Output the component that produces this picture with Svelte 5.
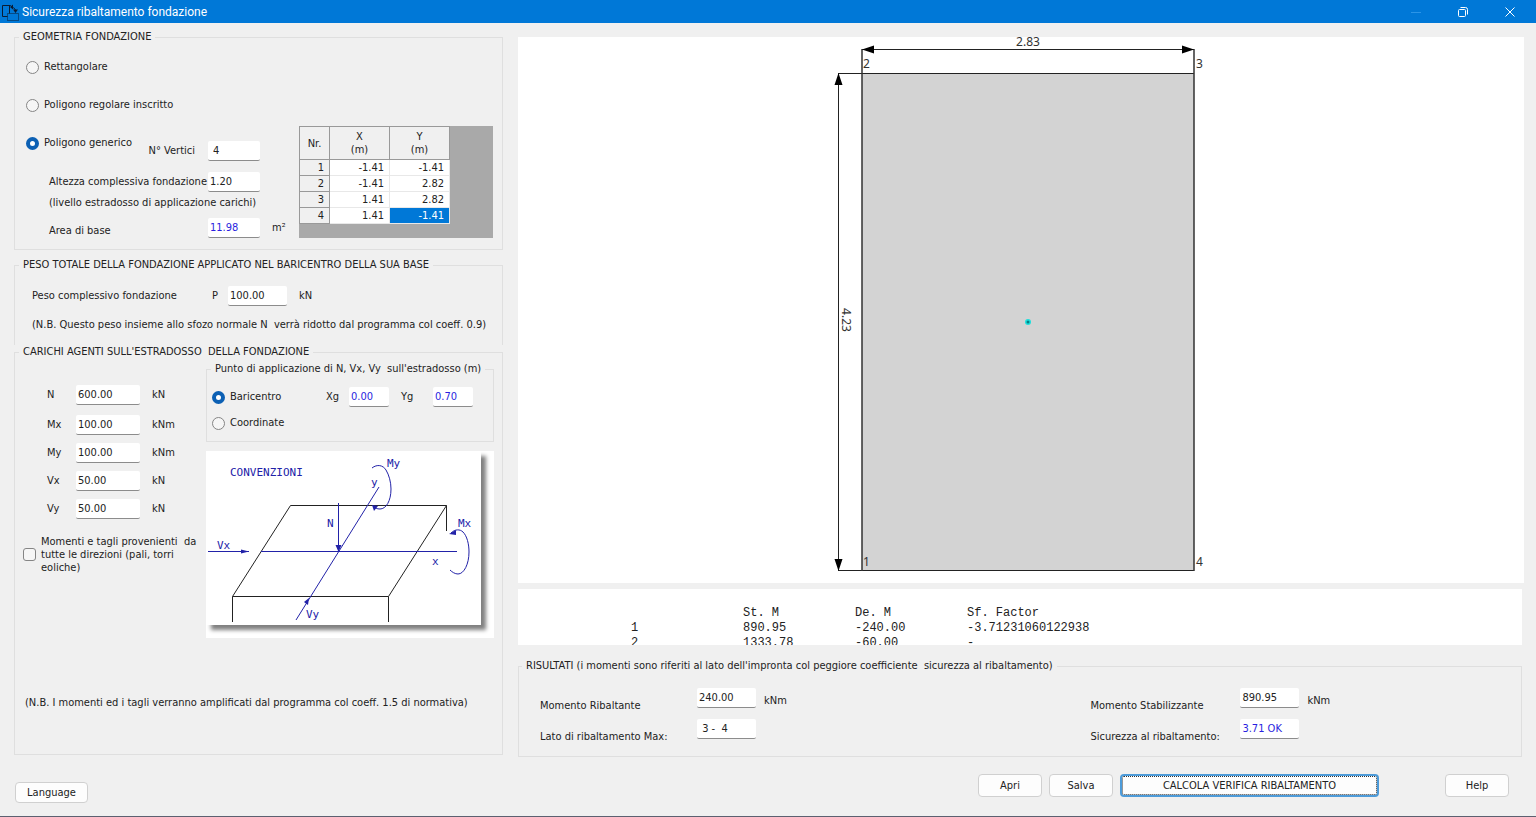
<script>
  let shape = $state("generic");
  let point = $state("centroid");
  let allDirections = $state(false);

  let vertexCount = $state("4");
  let height = $state("1.20");
  let weight = $state("100.00");

  const vertices = [
    { x: "-1.41", y: "-1.41" },
    { x: "-1.41", y: "2.82" },
    { x: "1.41", y: "2.82" },
    { x: "1.41", y: "-1.41" }
  ];
  let selected = $state(3);

  let loads = $state([
    { name: "N", value: "600.00", unit: "kN" },
    { name: "Mx", value: "100.00", unit: "kNm" },
    { name: "My", value: "100.00", unit: "kNm" },
    { name: "Vx", value: "50.00", unit: "kN" },
    { name: "Vy", value: "50.00", unit: "kN" }
  ]);

  const checks = [
    { side: "1", st: "890.95", de: "-240.00", sf: "-3.71231060122938" },
    { side: "2", st: "1333.78", de: "-60.00", sf: "-" }
  ];
</script>

<div class="window">
  <header>
    <svg class="app-icon" width="18" height="20" viewBox="0 0 18 20" fill="none" stroke="#0a1c33">
      <path d="M9.5 4V3.5h-8v11h5" />
      <path d="M8.5 3.5v8" />
      <path d="M11 5.500c2 0 3 1 3.500 3" />
      <path d="M12 7.500h5l-2.500 3.500z M12 2.500v5l-3-2.500z" fill="#0a1c33" stroke="none" />
      <path d="M6.500 11.500h11v7h-11z" stroke-dasharray="1 1" />
    </svg>
    <h1>Sicurezza ribaltamento fondazione</h1>
    <div class="controls">
      <button aria-label="Riduci a icona">
        <svg width="10" height="10"><path d="M0 5.5h10" stroke="#2b95e8" /></svg>
      </button>
      <button aria-label="Ripristina">
        <svg width="10" height="10" fill="none" stroke="#fff">
          <rect x="0.5" y="2.5" width="7" height="7" rx="1" />
          <path d="M2.500 .5h5a2 2 0 0 1 2 2v5" />
        </svg>
      </button>
      <button aria-label="Chiudi">
        <svg width="10" height="10"><path d="M.5 .5l9 9M9.500 .5l-9 9" stroke="#fff" /></svg>
      </button>
    </div>
  </header>

  <main>
    <div class="left">
      <fieldset class="geometry">
        <legend>GEOMETRIA FONDAZIONE</legend>
        <div class="geo-form">
          <label class="option"><input type="radio" value="rect" bind:group={shape} />Rettangolare</label>
          <label class="option"><input type="radio" value="regular" bind:group={shape} />Poligono regolare inscritto</label>
          <div class="generic">
            <label class="option"><input type="radio" value="generic" bind:group={shape} />Poligono generico</label>
            <label class="count" for="count">N° Vertici</label>
            <input id="count" class="count-box" bind:value={vertexCount} />
          </div>
          <div class="geo-row">
            <label for="height">Altezza complessiva fondazione</label>
            <input id="height" bind:value={height} />
          </div>
          <p class="hint">(livello estradosso di applicazione carichi)</p>
          <div class="geo-row area">
            <label for="area">Area di base</label>
            <input id="area" class="computed" value="11.98" readonly />
            <span>m²</span>
          </div>
        </div>
        <div class="sheet">
          <table>
            <thead>
              <tr><th>Nr.</th><th>X<br />(m)</th><th>Y<br />(m)</th></tr>
            </thead>
            <tbody>
              {#each vertices as v, i}
                <tr>
                  <th>{i + 1}</th>
                  <td>{v.x}</td>
                  <td class:selected={selected === i} onclick={() => (selected = i)}>{v.y}</td>
                </tr>
              {/each}
            </tbody>
          </table>
        </div>
      </fieldset>

      <fieldset class="weight">
        <legend>PESO TOTALE DELLA FONDAZIONE APPLICATO NEL BARICENTRO DELLA SUA BASE</legend>
        <div class="weight-row">
          <span>Peso complessivo fondazione</span>
          <label for="weight">P</label>
          <input id="weight" bind:value={weight} />
          <span class="unit">kN</span>
        </div>
        <p>(N.B. Questo peso insieme allo sfozo normale N&nbsp; verrà ridotto dal programma col coeff. 0.9)</p>
      </fieldset>

      <fieldset class="loads">
        <legend>CARICHI AGENTI SULL'ESTRADOSSO&nbsp; DELLA FONDAZIONE</legend>
        <div class="load-cols">
          <div class="load-list">
            {#each loads as load}
              <div class="load">
                <label for={load.name}>{load.name}</label>
                <input id={load.name} bind:value={load.value} />
                <span class="unit">{load.unit}</span>
              </div>
            {/each}
            <label class="directions">
              <input type="checkbox" bind:checked={allDirections} />
              <span>Momenti e tagli provenienti&nbsp; da<br />tutte le direzioni (pali, torri<br />eoliche)</span>
            </label>
          </div>

          <div class="load-side">
            <fieldset class="point">
              <legend>Punto di applicazione di N, Vx, Vy&nbsp; sull'estradosso (m)</legend>
              <div class="point-row">
                <label class="option"><input type="radio" value="centroid" bind:group={point} />Baricentro</label>
                <label for="xg">Xg</label>
                <input id="xg" class="computed" value="0.00" readonly />
                <label for="yg">Yg</label>
                <input id="yg" class="computed" value="0.70" readonly />
              </div>
              <label class="option"><input type="radio" value="coords" bind:group={point} />Coordinate</label>
            </fieldset>

            <figure>
              <svg width="275" height="174" viewBox="0 0 275 174" fill="none">
                <!-- footing block -->
                <path
                  stroke="#222"
                  d="M84.500 54.500H240.500V80M84.500 54.500L26.500 145.500H182.500L240.500 54.500M26.500 145.500V171M182.500 145.500V171"
                />
                <!-- axes and forces -->
                <g stroke="#2222a8">
                  <path d="M55 100.500H251M90 169L173 36M132.500 52V100M2 100.500H43" />
                  <path d="M166 17c5-4 11-3 14 2 3 5 5 12 5 19 0 12-5 20-11 20-3 0-5-1-7-3" />
                  <path d="M245 82c4-4 9-4 12-1 4 4 6 12 6 20 0 12-5 22-11 22-3 0-6-2-8-4" />
                </g>
                <path
                  fill="#2222a8"
                  d="M132.500 101l-3-7h6zM43 100.500l-8-2v4zM103 147l-5 4 4 3zM166 54l6 1-4 5zM243 83l7-4 0 5z"
                />
                <g class="cad" fill="#2222a8">
                  <text x="24" y="25">CONVENZIONI</text>
                  <text x="181" y="16">My</text>
                  <text x="165" y="35">y</text>
                  <text x="121" y="76">N</text>
                  <text x="252" y="76">Mx</text>
                  <text x="226" y="114">x</text>
                  <text x="11" y="98">Vx</text>
                  <text x="100" y="167">Vy</text>
                </g>
              </svg>
            </figure>
          </div>
        </div>
        <p class="note">(N.B. I momenti ed i tagli verranno amplificati dal programma col coeff. 1.5 di normativa)</p>
      </fieldset>
    </div>

    <div class="right">
      <svg class="plan" viewBox="0 0 1006 546">
        <rect x="344" y="36.5" width="332" height="497" fill="#d3d3d3" />
        <path
          fill="none"
          stroke="#222"
          d="M344 12.500H676M320.500 36V534M320 36.500H676M320 533.500H676"
        />
        <path fill="none" stroke="#333" stroke-width="1.500" d="M344 12V534M676 12V534" />
        <path
          d="M344 12.500l12-4v8zM676 12.500l-12-4v8zM320.500 36l-4 12h8zM320.500 534l-4-12h8z"
        />
        <circle cx="510" cy="285" r="3" fill="#1de0dc" />
        <circle cx="510" cy="285" r="1.500" fill="#067f86" />
        <g fill="#333">
          <text x="510" y="9" text-anchor="middle">2.83</text>
          <text transform="translate(324 283) rotate(90)" text-anchor="middle">4.23</text>
          <text x="345" y="31">2</text>
          <text x="678" y="31">3</text>
          <text x="345" y="529">1</text>
          <text x="678" y="529">4</text>
        </g>
      </svg>

      <div class="report">
        <table>
          <thead>
            <tr><th></th><th>St. M</th><th>De. M</th><th>Sf. Factor</th></tr>
          </thead>
          <tbody>
            {#each checks as c}
              <tr><td>{c.side}</td><td>{c.st}</td><td>{c.de}</td><td>{c.sf}</td></tr>
            {/each}
          </tbody>
        </table>
      </div>

      <fieldset class="results">
        <legend>RISULTATI (i momenti sono riferiti al lato dell'impronta col peggiore coefficiente&nbsp; sicurezza al ribaltamento)</legend>
        <div class="result-grid">
          <div class="result">
            <label for="overturning">Momento Ribaltante</label>
            <input id="overturning" value="240.00" readonly />
            <span>kNm</span>
          </div>
          <div class="result outcome">
            <label for="stabilizing">Momento Stabilizzante</label>
            <input id="stabilizing" value="890.95" readonly />
            <span>kNm</span>
          </div>
          <div class="result">
            <label for="side">Lato di ribaltamento Max:</label>
            <input id="side" value=" 3 -  4" readonly />
          </div>
          <div class="result outcome">
            <label for="safety">Sicurezza al ribaltamento:</label>
            <input id="safety" class="computed" value="3.71 OK" readonly />
          </div>
        </div>
      </fieldset>
    </div>
  </main>

  <footer>
    <button class="language">Language</button>
    <button>Apri</button>
    <button>Salva</button>
    <button class="primary">CALCOLA VERIFICA RIBALTAMENTO</button>
    <button class="help">Help</button>
  </footer>
</div>

<style>
  :global(body) {
    margin: 0;
    background: #f0f0f0;
  }
  .window {
    min-height: 100vh;
    box-sizing: border-box;
    display: flex;
    flex-direction: column;
    border-bottom: 1px solid #5c6070;
    background: #f0f0f0;
    color: #222;
    font: 11px/14px "DejaVu Sans Condensed", "Noto Sans", sans-serif;
    white-space: nowrap;
  }
  header {
    display: flex;
    align-items: center;
    height: 23px;
    padding: 0 3px 0 1px;
    background: #0078d7;
    color: #fff;
  }
  h1 {
    flex: 1;
    margin: 0 0 0 3px;
    font: 12px/18px Roboto, "Noto Sans", sans-serif;
  }
  .controls {
    display: flex;
  }
  .controls button {
    display: flex;
    align-items: center;
    justify-content: center;
    width: 47px;
    height: 23px;
    padding: 0;
    border: 0;
    background: none;
  }
  main {
    flex: 1;
    display: grid;
    grid-template-columns: 489px 1fr;
    align-items: start;
    gap: 15px;
    padding: 7px 12px 0 14px;
  }
  p {
    margin: 0;
  }
  fieldset {
    min-width: 0;
    margin: 0;
    padding: 0;
    border: 1px solid #dfdfdf;
  }
  legend {
    margin-left: 4px;
    padding: 0 4px;
  }
  input {
    box-sizing: border-box;
    min-width: 0;
    height: 20px;
    margin: 0;
    padding: 0 2px;
    border: 0;
    border-bottom: 1px solid #8c8c8c;
    border-radius: 2px;
    background: #fff;
    color: #222;
    font: inherit;
  }
  .computed {
    color: #2a1fe0;
  }
  input[type="radio"],
  input[type="checkbox"] {
    flex: none;
    appearance: none;
    width: 13px;
    height: 13px;
    padding: 0;
    border: 1px solid #858585;
    background: #f6f6f6;
  }
  input[type="radio"] {
    border-radius: 50%;
  }
  input[type="radio"]:checked {
    border: 4px solid #0c60b4;
    background: #fff;
  }
  input[type="checkbox"] {
    border-radius: 3px;
  }
  input[type="checkbox"]:checked {
    background: #0c60b4;
  }
  .option {
    display: flex;
    align-items: center;
    gap: 5px;
    height: 20px;
  }

  .geometry {
    display: flex;
    justify-content: space-between;
    height: 220px;
    box-sizing: border-box;
    margin-bottom: 8px;
  }
  .geo-form {
    width: 260px;
    padding: 13px 0 0 11px;
  }
  .geo-form > .option {
    margin-bottom: 18px;
  }
  .generic {
    display: flex;
    height: 28px;
  }
  .generic .option {
    flex: 1;
  }
  .count {
    align-self: flex-end;
    margin-right: 13px;
    line-height: 20px;
  }
  .count-box {
    align-self: flex-end;
    width: 52px;
    margin-right: 26px;
    padding-left: 5px;
  }
  .geo-row {
    display: grid;
    grid-template-columns: 159px 52px 14px;
    align-items: center;
    margin-top: 11px;
    padding-left: 23px;
  }
  .hint {
    margin-top: 4px;
    padding-left: 23px;
  }
  .area {
    margin-top: 8px;
  }
  .area label {
    align-self: end;
  }
  .area span {
    margin-left: 12px;
  }
  .sheet {
    width: 194px;
    height: 112px;
    margin: 82px 9px 0 0;
    background: #a9a9a9;
  }
  .sheet table {
    table-layout: fixed;
    width: 151px;
    border-collapse: collapse;
  }
  .sheet th {
    padding: 0;
    border: 1px solid #999;
    background: #f0f0f0;
    font-weight: normal;
    line-height: 13px;
  }
  .sheet thead th {
    width: 59px;
    height: 32px;
  }
  .sheet thead th:first-child {
    width: 29px;
  }
  .sheet tbody th,
  .sheet td {
    height: 15px;
    padding: 0 5px 0 0;
    line-height: 15px;
    text-align: right;
  }
  .sheet td {
    border: 1px solid #e8e8e8;
    background: #fff;
  }
  .sheet td.selected {
    background: #0078d7;
    color: #fff;
  }

  .weight {
    box-sizing: border-box;
    height: 87px;
    border-bottom: 0;
  }
  .weight-row {
    display: grid;
    grid-template-columns: 180px 16px 59px auto;
    align-items: center;
    margin: 14px 0 12px;
    padding-left: 17px;
  }
  .weight p {
    padding-left: 17px;
  }
  .unit {
    margin-left: 12px;
  }

  .load-cols {
    display: grid;
    grid-template-columns: 1fr 288px;
    padding: 3px 8px 0;
  }
  .load-list {
    padding-top: 23px;
  }
  .load {
    display: grid;
    grid-template-columns: 29px 64px auto;
    align-items: center;
    margin-bottom: 8px;
    padding-left: 24px;
  }
  .load:first-child {
    margin-bottom: 10px;
  }
  .directions {
    display: flex;
    align-items: center;
    gap: 5px;
    margin-top: 16px;
    line-height: 13px;
  }
  .point {
    box-sizing: border-box;
    height: 80px;
    margin-bottom: 9px;
  }
  .point .option {
    padding-left: 5px;
  }
  .point-row {
    display: grid;
    grid-template-columns: 119px 23px 52px 32px 40px;
    align-items: center;
    margin: 11px 0 6px;
  }
  .point-row .option {
    padding-left: 5px;
  }
  .point-row input:not([type="radio"]) {
    width: 40px;
  }
  figure {
    margin: 0;
    padding: 0 13px 13px 0;
    background: #fff;
  }
  figure svg {
    display: block;
    background: #fff;
    box-shadow: 5px 5px 4px #808080;
  }
  .cad text {
    font: 11px "DejaVu Sans Mono", monospace;
  }
  .note {
    margin: 58px 0 44px 10px;
  }

  .right {
    padding-top: 7px;
  }
  .plan {
    display: block;
    width: 100%;
    height: auto;
    overflow: visible;
    background: #fff;
  }
  .plan text {
    font: 12px "Noto Sans", sans-serif;
  }
  .report {
    height: 56px;
    margin: 6px 2px 14px 0;
    padding: 17px 0 0 113px;
    box-sizing: border-box;
    overflow: hidden;
    background: #fff;
  }
  .report table {
    border-collapse: collapse;
    font: 12px/15px "Liberation Mono", monospace;
  }
  .report th,
  .report td {
    min-width: 112px;
    padding: 0;
    font-weight: normal;
    text-align: left;
  }
  .results {
    margin-right: 2px;
  }
  .results legend {
    margin-left: 3px;
  }
  .result-grid {
    display: grid;
    grid-template-columns: 551fr 431fr;
    row-gap: 6px;
    padding: 15px 0 12px 21px;
  }
  .result {
    display: grid;
    grid-template-columns: 149px 59px auto;
    column-gap: 8px;
    height: 25px;
  }
  .outcome {
    grid-template-columns: 142px 59px auto;
  }
  .result label {
    align-self: end;
  }
  .result span {
    align-self: center;
  }

  footer {
    display: flex;
    align-items: flex-start;
    gap: 7px;
    padding: 17px 27px 13px 15px;
  }
  footer button {
    width: 64px;
    height: 23px;
    padding: 0;
    border: 1px solid #d0d0d0;
    border-radius: 4px;
    background: #fdfdfd;
    color: #222;
    font: inherit;
  }
  footer .language {
    width: 73px;
    height: 21px;
    margin: 8px auto 0 0;
  }
  footer .primary {
    width: 259px;
    border: 2px solid #4d9bd9;
    outline: 1px dotted #333;
    outline-offset: -3px;
  }
  footer .help {
    margin-left: 59px;
  }
</style>
